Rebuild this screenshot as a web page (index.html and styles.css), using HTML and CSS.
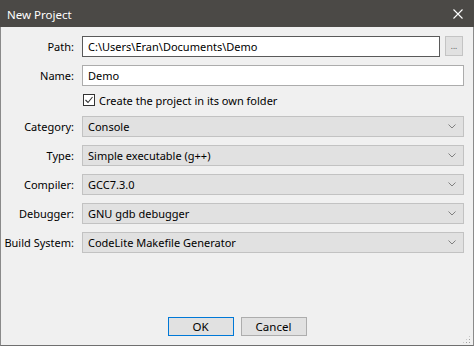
FILE: index.html
```html
<!DOCTYPE html>
<html lang="en">
<head>
  <meta charset="UTF-8">
  <title>New Project</title>
  <link rel="stylesheet" href="styles.css">
</head>
<body>
  <div class="window">
    <div class="titlebar">
      <span class="title">New Project</span>
      <svg class="close" width="10" height="10" viewBox="0 0 10 10">
        <path d="M0.5 0.5 L9.5 9.5 M9.5 0.5 L0.5 9.5" stroke="#fff" stroke-width="1.1" fill="none"/>
      </svg>
    </div>
    <div class="content">
      <div class="form">
        <label class="lbl">Path:</label>
        <div class="path-row">
          <div class="input focus">C:\Users\Eran\Documents\Demo</div>
          <div class="browse">...</div>
        </div>

        <label class="lbl">Name:</label>
        <div class="input">Demo</div>

        <span></span>
        <div class="check-row">
          <svg class="checkbox" width="12" height="12" viewBox="0 0 12 12">
            <rect x="0.5" y="0.5" width="11" height="11" fill="#fff" stroke="#333"/>
            <path d="M2.5 6 L5 8.5 L9.5 3" stroke="#333" stroke-width="1.1" fill="none"/>
          </svg>
          <span>Create the project in its own folder</span>
        </div>

        <label class="lbl">Category:</label>
        <div class="select"><span>Console</span><svg class="chev" width="8" height="5" viewBox="0 0 8 5"><path d="M0.5 0.5 L4 4 L7.5 0.5" stroke="#808080" fill="none"/></svg></div>

        <label class="lbl">Type:</label>
        <div class="select"><span>Simple executable (g++)</span><svg class="chev" width="8" height="5" viewBox="0 0 8 5"><path d="M0.5 0.5 L4 4 L7.5 0.5" stroke="#808080" fill="none"/></svg></div>

        <label class="lbl">Compiler:</label>
        <div class="select"><span>GCC7.3.0</span><svg class="chev" width="8" height="5" viewBox="0 0 8 5"><path d="M0.5 0.5 L4 4 L7.5 0.5" stroke="#808080" fill="none"/></svg></div>

        <label class="lbl">Debugger:</label>
        <div class="select"><span>GNU gdb debugger</span><svg class="chev" width="8" height="5" viewBox="0 0 8 5"><path d="M0.5 0.5 L4 4 L7.5 0.5" stroke="#808080" fill="none"/></svg></div>

        <label class="lbl">Build System:</label>
        <div class="select"><span>CodeLite Makefile Generator</span><svg class="chev" width="8" height="5" viewBox="0 0 8 5"><path d="M0.5 0.5 L4 4 L7.5 0.5" stroke="#808080" fill="none"/></svg></div>
      </div>

      <div class="buttons">
        <div class="btn default">OK</div>
        <div class="btn">Cancel</div>
      </div>
      <div class="grip"></div>
    </div>
  </div>
</body>
</html>
```

FILE: styles.css
```css
* {
  margin: 0;
  padding: 0;
  box-sizing: border-box;
}
body {
  width: 474px;
  height: 346px;
  overflow: hidden;
  font-family: "Noto Sans", "Open Sans", sans-serif;
  font-size: 11px;
  color: #000;
  background: #f0f0f0;
}
.window {
  width: 474px;
  height: 346px;
  display: flex;
  flex-direction: column;
  border-left: 1px solid #8a8a8a;
  border-right: 1px solid #8a8a8a;
  border-bottom: 1px solid #6f6f6f;
}
.titlebar {
  height: 27px;
  background: #4b4946;
  color: #fff;
  display: flex;
  align-items: center;
  justify-content: space-between;
  padding: 0 11px 0 7px;
  margin: 0 -1px;
  flex-shrink: 0;
}
.title {
  font-size: 11.5px;
  padding-top: 1px;
}
.content {
  flex: 1;
  display: flex;
  flex-direction: column;
  position: relative;
  padding: 9px 9px 9px 0;
}
.form {
  display: grid;
  grid-template-columns: 73px 1fr;
  column-gap: 8px;
  row-gap: 8px;
  align-items: center;
}
.lbl {
  text-align: right;
  white-space: nowrap;
}
.path-row {
  display: flex;
  gap: 5px;
}
.input {
  flex: 1;
  height: 21px;
  background: #fff;
  border: 1px solid #acacac;
  padding: 0 5px;
  line-height: 19px;
}
.input.focus {
  border-color: #5a5a5a;
}
.browse {
  width: 18px;
  height: 20px;
  background: #e1e1e1;
  border: 1px solid #c4c4c4;
  font-size: 8px;
  color: #555;
  text-align: center;
  line-height: 18px;
  margin-right: 1px;
}
.check-row {
  height: 16px;
  display: flex;
  align-items: center;
  gap: 4px;
  padding-left: 1px;
  margin-top: -2px;
}
.select {
  height: 21px;
  background: #e1e1e1;
  border: 1px solid #c2c2c2;
  display: flex;
  align-items: center;
  justify-content: space-between;
  padding: 0 7px 0 5px;
}
.buttons {
  margin-top: auto;
  display: flex;
  justify-content: center;
  gap: 7px;
  padding-left: 9px;
}
.btn {
  width: 66px;
  height: 19px;
  background: #e1e1e1;
  border: 1px solid #adadad;
  text-align: center;
  line-height: 17px;
  font-size: 11.5px;
}
.btn.default {
  border: 1px solid #0078d7;
}
.grip {
  position: absolute;
  right: 2px;
  bottom: 1px;
  width: 9px;
  height: 9px;
  background:
    radial-gradient(circle, #a0a0a0 0.8px, transparent 1px) 0 0 / 3px 3px;
  clip-path: polygon(100% 0, 100% 100%, 0 100%);
}
```
